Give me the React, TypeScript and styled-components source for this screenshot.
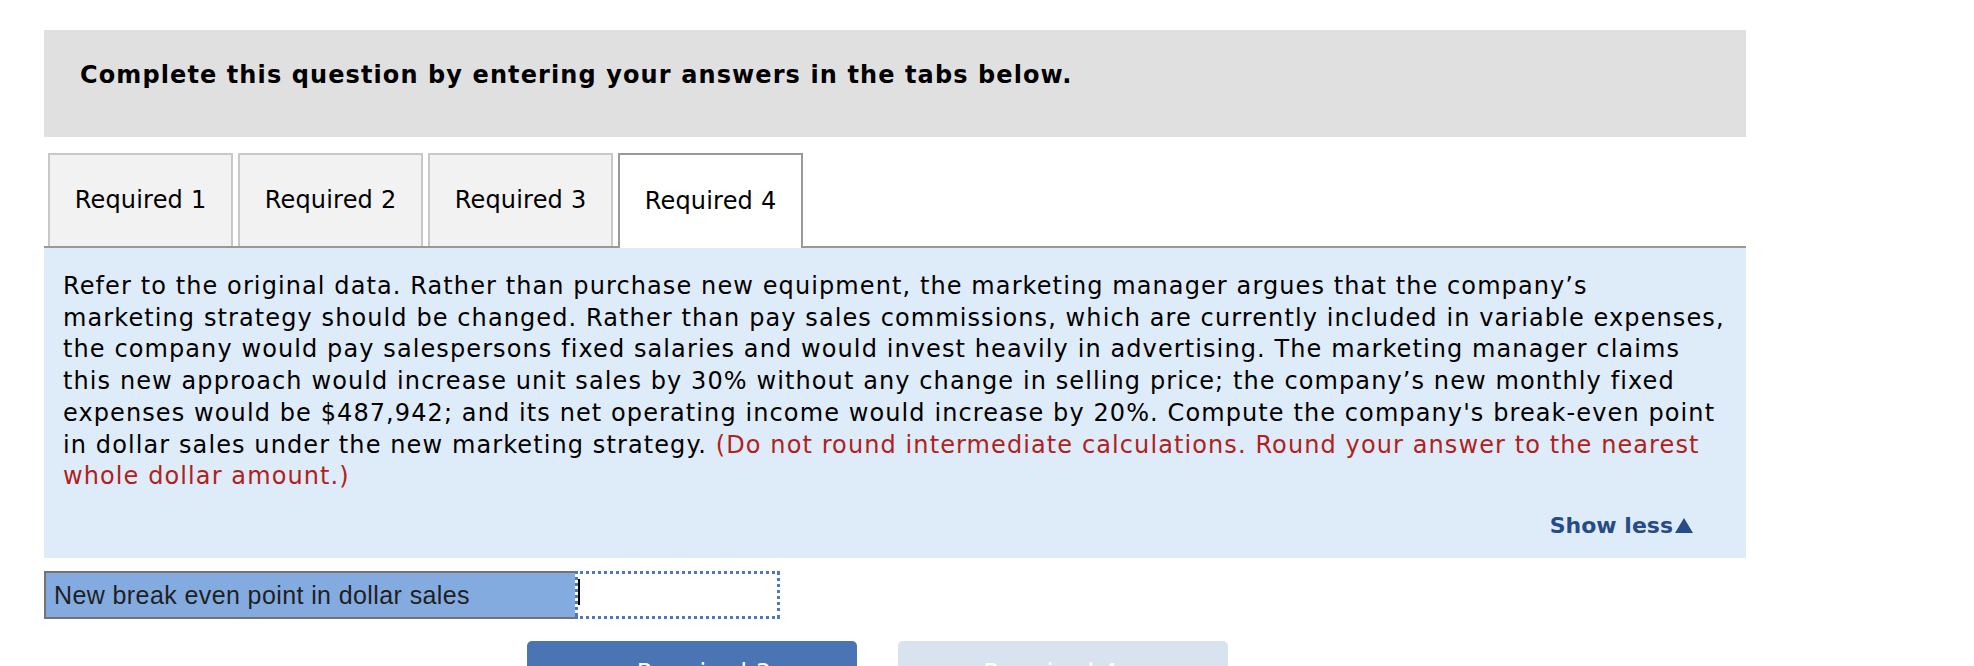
import React, { useState } from "react";
import styled, { createGlobalStyle } from "styled-components";

const GlobalStyle = createGlobalStyle`
  html, body {
    margin: 0;
    padding: 0;
    background: #ffffff;
  }
  body {
    font-family: "DejaVu Sans", Verdana, sans-serif;
    color: #000;
  }
`;

const Page = styled.div`
  width: 1702px;
  padding: 30px 0 0 44px;
`;

const Banner = styled.div`
  box-sizing: border-box;
  height: 107px;
  background: #e0e0e0;
  padding: 30px 0 0 36px;
  font-size: 24px;
  line-height: 30px;
  font-weight: bold;
  letter-spacing: 1.1px;
`;

const TabBar = styled.div`
  display: flex;
  align-items: flex-end;
  gap: 5px;
  margin-top: 16px;
  padding-left: 4px;
  border-bottom: 2px solid #999999;
`;

const Tab = styled.button<{ $active?: boolean }>`
  box-sizing: border-box;
  width: 185px;
  height: ${(p) => (p.$active ? "95px" : "93px")};
  margin-bottom: ${(p) => (p.$active ? "-2px" : "0")};
  display: flex;
  align-items: center;
  justify-content: center;
  padding: 0 0 2px;
  background: ${(p) => (p.$active ? "#ffffff" : "#f2f2f2")};
  border: 2px solid ${(p) => (p.$active ? "#999999" : "#c8c8c8")};
  border-bottom: none;
  font-family: "DejaVu Sans", Verdana, sans-serif;
  font-size: 24px;
  letter-spacing: 0.2px;
  color: #000;
  cursor: pointer;
`;

const Panel = styled.div`
  box-sizing: border-box;
  height: 310px;
  background: #deebf8;
  padding: 23px 16px 0 19px;
`;

const Prompt = styled.p`
  margin: 0;
  font-size: 24px;
  line-height: 31.7px;
  white-space: nowrap;
  letter-spacing: 1.1px;
`;

const Note = styled.span`
  color: #b0211d;
`;

const ShowLessRow = styled.div`
  display: flex;
  justify-content: flex-end;
  margin-top: 20px;
  padding-right: 37px;
`;

const ShowLess = styled.a`
  display: flex;
  align-items: center;
  gap: 2px;
  font-size: 22px;
  line-height: 26px;
  font-weight: bold;
  color: #264b87;
  text-decoration: none;
  cursor: pointer;
`;

const AnswerRow = styled.div`
  display: flex;
  margin-top: 13px;
  height: 48px;
`;

const AnswerLabel = styled.div`
  box-sizing: border-box;
  width: 531px;
  display: flex;
  align-items: center;
  padding-left: 8px;
  background: #84abdf;
  border: 2px solid #737373;
  border-right: none;
  font-family: "Liberation Sans", Arial, sans-serif;
  font-size: 25px;
  letter-spacing: 0.4px;
  color: #1f1f1f;
`;

const InputCell = styled.div`
  position: relative;
  display: flex;
  &::before {
    content: "";
    position: absolute;
    left: 0;
    top: 0;
    bottom: 0;
    width: 3px;
    background-image: linear-gradient(#4a78c4 50%, transparent 50%);
    background-size: 3px 6px;
  }
  &::after {
    content: "";
    position: absolute;
    left: 3px;
    top: 8px;
    height: 26px;
    width: 2px;
    background: #000;
  }
`;

const AnswerInput = styled.input`
  box-sizing: border-box;
  width: 205px;
  height: 48px;
  margin: 0;
  padding: 0 8px;
  border: 3px dotted #4a78c4;
  border-left: none;
  outline: none;
  background: #ffffff;
  font-family: "Liberation Sans", Arial, sans-serif;
  font-size: 22px;
`;

const NavRow = styled.div`
  display: flex;
  gap: 41px;
  margin-top: 22px;
  padding-left: 483px;
`;

const NavButton = styled.button<{ $disabled?: boolean }>`
  width: 330px;
  height: 64px;
  border: none;
  border-radius: 5px;
  background: ${(p) => (p.$disabled ? "#d9e3ef" : "#4a74b3")};
  color: #ffffff;
  font-family: "DejaVu Sans", Verdana, sans-serif;
  font-size: 24px;
  letter-spacing: 0.5px;
  display: flex;
  align-items: center;
  justify-content: center;
  gap: 14px;
  cursor: pointer;
`;

const tabs = ["Required 1", "Required 2", "Required 3", "Required 4"];

const App: React.FC = () => {
  const [active, setActive] = useState<string>("Required 4");
  const [value, setValue] = useState<string>("");

  return (
    <>
      <GlobalStyle />
      <Page>
        <Banner>Complete this question by entering your answers in the tabs below.</Banner>

        <TabBar>
          {tabs.map((t) => (
            <Tab key={t} $active={t === active} onClick={() => setActive(t)}>
              {t}
            </Tab>
          ))}
        </TabBar>

        <Panel>
          <Prompt>
            Refer to the original data. Rather than purchase new equipment, the marketing manager argues that the company’s
            <br />
            marketing strategy should be changed. Rather than pay sales commissions, which are currently included in variable expenses,
            <br />
            the company would pay salespersons fixed salaries and would invest heavily in advertising. The marketing manager claims
            <br />
            this new approach would increase unit sales by 30% without any change in selling price; the company’s new monthly fixed
            <br />
            expenses would be $487,942; and its net operating income would increase by 20%. Compute the company's break-even point
            <br />
            in dollar sales under the new marketing strategy.{" "}
            <Note>
              (Do not round intermediate calculations. Round your answer to the nearest
              <br />
              whole dollar amount.)
            </Note>
          </Prompt>
          <ShowLessRow>
            <ShowLess>
              Show less
              <svg width="18" height="15" viewBox="0 0 18 15">
                <polygon points="9,0 18,15 0,15" fill="#264b87" />
              </svg>
            </ShowLess>
          </ShowLessRow>
        </Panel>

        <AnswerRow>
          <AnswerLabel>New break even point in dollar sales</AnswerLabel>
          <InputCell>
            <AnswerInput value={value} onChange={(e) => setValue(e.target.value)} />
          </InputCell>
        </AnswerRow>

        <NavRow>
          <NavButton>
            <span>‹</span>
            <span>Required 3</span>
          </NavButton>
          <NavButton $disabled>
            <span>Required 4</span>
            <span>›</span>
          </NavButton>
        </NavRow>
      </Page>
    </>
  );
};

export default App;
